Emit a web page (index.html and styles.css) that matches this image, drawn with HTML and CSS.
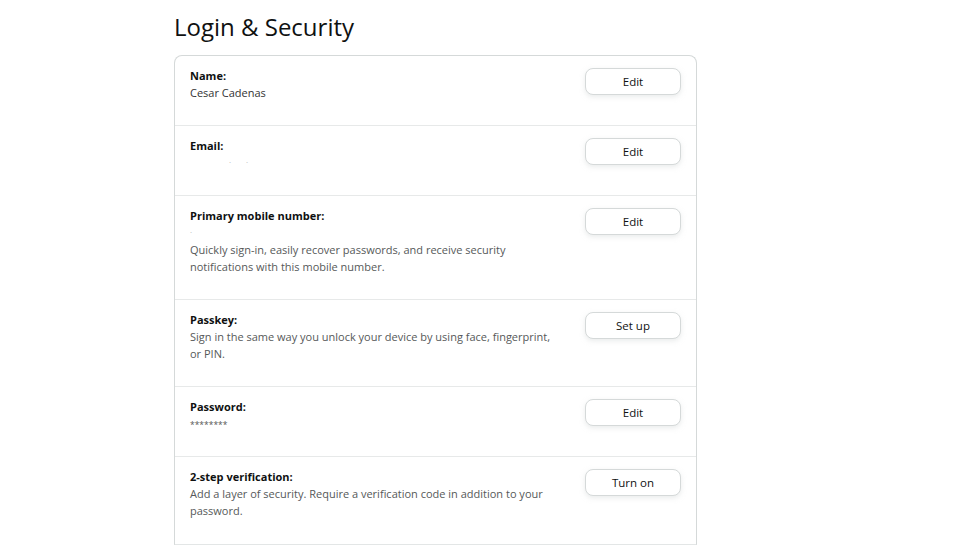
FILE: index.html
```html
<!DOCTYPE html>
<html>
<head>
<meta charset="utf-8">
<link rel="stylesheet" href="styles.css">
</head>
<body>
<main class="page">
  <h1 class="title">Login &amp; Security</h1>
  <section class="card">
    <div class="row">
      <div class="info">
        <div class="label">Name:</div>
        <div class="value">Cesar Cadenas</div>
      </div>
      <button class="btn">Edit</button>
    </div>
    <div class="row">
      <div class="info">
        <div class="label">Email:</div>
        <div class="value redacted"><span class="d1">.</span><span class="d2">.</span></div>
      </div>
      <button class="btn">Edit</button>
    </div>
    <div class="row">
      <div class="info">
        <div class="label">Primary mobile number:</div>
        <div class="value redacted"><span class="d0">.</span></div>
        <div class="desc">Quickly sign-in, easily recover passwords, and receive security notifications with this mobile number.</div>
      </div>
      <button class="btn">Edit</button>
    </div>
    <div class="row">
      <div class="info">
        <div class="label">Passkey:</div>
        <div class="desc">Sign in the same way you unlock your device by using face, fingerprint, or PIN.</div>
      </div>
      <button class="btn">Set up</button>
    </div>
    <div class="row">
      <div class="info">
        <div class="label">Password:</div>
        <div class="value stars">********</div>
      </div>
      <button class="btn">Edit</button>
    </div>
    <div class="row">
      <div class="info">
        <div class="label">2-step verification:</div>
        <div class="desc">Add a layer of security. Require a verification code in addition to your password.</div>
      </div>
      <button class="btn">Turn on</button>
    </div>
  </section>
</main>
</body>
</html>
```

FILE: styles.css
```css
html, body {
  margin: 0;
  padding: 0;
  background: #ffffff;
}
body {
  font-family: "Open Sans", "Noto Sans", "Liberation Sans", sans-serif;
  color: #0f1111;
}
.page {
  padding-left: 174px;
  width: 523px;
}
.title {
  margin: 0;
  padding-top: 11px;
  height: 55px;
  box-sizing: border-box;
  font-size: 24px;
  font-weight: 400;
  line-height: 32px;
  color: #0f1111;
}
.card {
  border: 1px solid #d5d9d9;
  border-radius: 8px;
  border-bottom-left-radius: 0;
  border-bottom-right-radius: 0;
  border-bottom: 1px solid #e3e6e6;
}
.row {
  display: flex;
  justify-content: space-between;
  align-items: flex-start;
  padding: 11px 15px 24px 15px;
  border-top: 1px solid #e7e9e9;
}
.row:first-child {
  border-top: none;
}
.row:last-child {
  padding-bottom: 25px;
}
.info {
  width: 368px;
  font-size: 11px;
  line-height: 17px;
}
.label {
  font-weight: 700;
  color: #0f1111;
}
.value {
  color: #333;
  min-height: 17px;
}
.redacted {
  position: relative;
  color: #bbb;
}
.redacted span {
  position: absolute;
  top: -3px;
  font-size: 8px;
}
.d0 { left: 0; }
.d1 { left: 39px; }
.d2 { left: 56px; }
.stars {
  box-sizing: border-box;
  height: 17px;
  padding-top: 4px;
  font-size: 8.5px;
  line-height: 11px;
  color: #555;
}
.desc {
  color: #565959;
}
.btn {
  margin-top: 1px;
  width: 96px;
  height: 27px;
  border: 1px solid #d5d9d9;
  border-radius: 8px;
  background: #fff;
  box-shadow: 0 2px 5px 0 rgba(213, 217, 217, 0.5);
  font-family: inherit;
  font-size: 11.5px;
  color: #0f1111;
  padding: 0;
  cursor: pointer;
}
```
